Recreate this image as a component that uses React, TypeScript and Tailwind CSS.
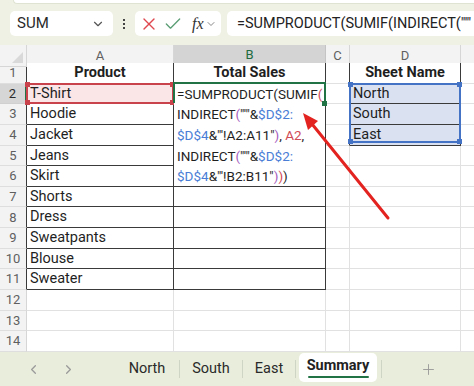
import { ChevronDown, ChevronLeft, ChevronRight, Plus, X, Check } from "lucide-react";

type Cell = { text?: string; bold?: boolean };

const products = ["T-Shirt", "Hoodie", "Jacket", "Jeans", "Skirt", "Shorts", "Dress", "Sweatpants", "Blouse", "Sweater"];
const sheets = ["North", "South", "East"];

function FormulaLines() {
  const blk = "text-[#1f1f1f]";
  const blu = "text-[#4a7ed6]";
  const red = "text-[#cf4a55]";
  const pur = "text-[#a35bbd]";
  return (
    <div className="flex flex-col pl-[3px] text-[13.5px] whitespace-nowrap">
      <div className="h-[20.64px] leading-[21px]">
        <span className={blk}>=SUMPRODUCT(SUMIF</span>
        <span className={red}>(</span>
      </div>
      <div className="h-[20.64px] leading-[21px]">
        <span className={blk}>INDIRECT</span>
        <span className={pur}>(</span>
        <span className={blk}>"'"&amp;</span>
        <span className={blu}>$D$2:</span>
      </div>
      <div className="h-[20.64px] leading-[21px]">
        <span className={blu}>$D$4</span>
        <span className={blk}>&amp;"'!A2:A11"</span>
        <span className={pur}>)</span>
        <span className={blk}>, </span>
        <span className={red}>A2</span>
        <span className={blk}>,</span>
      </div>
      <div className="h-[20.64px] leading-[21px]">
        <span className={blk}>INDIRECT</span>
        <span className={pur}>(</span>
        <span className={blk}>"'"&amp;</span>
        <span className={blu}>$D$2:</span>
      </div>
      <div className="h-[20.64px] leading-[21px]">
        <span className={blu}>$D$4</span>
        <span className={blk}>&amp;"'!B2:B11"</span>
        <span className={pur}>)</span>
        <span className={red}>)</span>
        <span className={blk}>)</span>
      </div>
    </div>
  );
}

function Handle({ className }: { className: string }) {
  return <span className={`absolute w-[5px] h-[5px] ${className}`} />;
}

function Grid() {
  const cells: React.ReactNode[] = [];
  for (let r = 1; r <= 14; r++) {
    const inTable = r <= 11;
    // row header
    cells.push(
      <div
        key={`h${r}`}
        className={
          r === 2
            ? "flex items-center justify-center bg-[#d6d6d6] text-[13px] text-[#2b2b2b] border-b border-b-[#d0d0d0] border-r-2 border-r-[#217346]"
            : inTable
            ? "flex items-center justify-center bg-[#f3f3f3] text-[13px] text-[#5f5f5f] border-b border-b-[#dedede] border-r border-r-[#3a3a3a]"
            : "flex items-center justify-center bg-[#f3f3f3] text-[13px] text-[#5f5f5f] border-b border-b-[#dedede] border-r border-r-[#d6d6d6]"
        }
      >
        {r}
      </div>
    );
    // column A
    const a: Cell = r === 1 ? { text: "Product", bold: true } : { text: products[r - 2] };
    cells.push(
      <div
        key={`a${r}`}
        className={
          r === 1
            ? "flex items-center justify-center font-bold text-[14.5px] border-r border-b border-r-[#3a3a3a] border-b-[#3a3a3a]"
            : r === 2
            ? "relative flex items-center pl-[3px] text-[14.5px] bg-[#fbe6e7] border-r border-b border-r-[#3a3a3a] border-b-[#3a3a3a]"
            : inTable
            ? "flex items-center pl-[3px] text-[14.5px] border-r border-b border-r-[#3a3a3a] border-b-[#3a3a3a]"
            : "border-r border-b border-r-[#e1e1e1] border-b-[#e1e1e1]"
        }
      >
        {a.text}
        {r === 2 && (
          <div className="absolute -left-px -top-px -right-px -bottom-px border-2 border-[#c9434d] pointer-events-none">
            <Handle className="-left-[3px] -top-[3px] bg-[#c9434d]" />
            <Handle className="-right-[3px] -top-[3px] bg-[#c9434d]" />
            <Handle className="-left-[3px] -bottom-[3px] bg-[#c9434d]" />
            <Handle className="-right-[3px] -bottom-[3px] bg-[#c9434d]" />
          </div>
        )}
      </div>
    );
    // column B
    if (r === 1) {
      cells.push(
        <div key="b1" className="flex items-center justify-center font-bold text-[14.5px] border-r border-b border-r-[#3a3a3a] border-b-[#3a3a3a]">
          Total Sales
        </div>
      );
    } else if (r === 2) {
      cells.push(
        <div key="b2" className="relative row-span-5 bg-white border-r border-b border-r-[#3a3a3a] border-b-[#3a3a3a]">
          <FormulaLines />
          <div className="absolute -left-px -top-[2px] -right-px h-[21px] border-t-2 border-x-2 border-[#217346] pointer-events-none">
            <Handle className="-right-[3px] -bottom-[3px] bg-[#217346]" />
          </div>
        </div>
      );
    } else if (r > 6) {
      cells.push(
        <div
          key={`b${r}`}
          className={
            inTable
              ? "border-r border-b border-r-[#3a3a3a] border-b-[#3a3a3a]"
              : "border-r border-b border-r-[#e1e1e1] border-b-[#e1e1e1]"
          }
        />
      );
    }
    // column C
    cells.push(
      <div
        key={`c${r}`}
        className={
          r <= 4
            ? "border-r border-b border-r-[#3a3a3a] border-b-[#e1e1e1]"
            : "border-r border-b border-r-[#e1e1e1] border-b-[#e1e1e1]"
        }
      />
    );
    // column D
    cells.push(
      <div
        key={`d${r}`}
        className={
          r === 1
            ? "flex items-center justify-center font-bold text-[14.5px] border-r border-b border-r-[#3a3a3a] border-b-[#3a3a3a]"
            : r === 2
            ? "relative flex items-center pl-[3px] text-[14.5px] bg-[#dae2f2] border-r border-b border-r-[#3a3a3a] border-b-[#3a3a3a]"
            : r <= 4
            ? "flex items-center pl-[3px] text-[14.5px] bg-[#dae2f2] border-r border-b border-r-[#3a3a3a] border-b-[#3a3a3a]"
            : "border-r border-b border-r-[#e1e1e1] border-b-[#e1e1e1]"
        }
      >
        {r === 1 ? "Sheet Name" : r <= 4 ? sheets[r - 2] : null}
        {r === 2 && (
          <div className="absolute -left-px -top-px -right-px h-[calc(300%+1px)] border-2 border-[#4472c4] pointer-events-none">
            <Handle className="-left-[3px] -top-[3px] bg-[#4472c4]" />
            <Handle className="-right-[3px] -top-[3px] bg-[#4472c4]" />
            <Handle className="-left-[3px] -bottom-[3px] bg-[#4472c4]" />
            <Handle className="-right-[3px] -bottom-[3px] bg-[#4472c4]" />
          </div>
        )}
      </div>
    );
    // column E
    cells.push(<div key={`e${r}`} className="border-b border-b-[#e1e1e1]" />);
  }
  return (
    <div className="grid grid-cols-[27px_147px_152px_24px_111px_1fr] grid-rows-14 h-[289px] bg-white text-[#1f1f1f]">
      {cells}
    </div>
  );
}

export default function App() {
  return (
    <div className="relative w-[474px] h-[386px] overflow-hidden flex flex-col bg-white font-['Roboto','Liberation_Sans',sans-serif]">
      {/* formula bar band */}
      <div className="h-[45px] bg-[#eef1e3] flex flex-col">
        <div className="h-[4px] ml-[13px] bg-white rounded-bl-[4px] border-b border-l border-[#dfe3d2]" />
        <div className="flex items-center mt-[7px] h-[25px]">
          <div className="ml-[10px] w-[103px] h-full bg-white rounded-[5px] flex items-center justify-between pl-[7px] pr-[8px] text-[15px] text-[#2a2a2a]">
            SUM
            <ChevronDown size={14} className="text-[#555]" />
          </div>
          <div className="w-[22px] flex flex-col items-center gap-[2px]">
            <span className="w-[2px] h-[2px] bg-[#444]" />
            <span className="w-[2px] h-[2px] bg-[#444]" />
            <span className="w-[2px] h-[2px] bg-[#444]" />
          </div>
          <div className="w-[86px] h-full bg-white rounded-[5px] flex items-center pl-[4px] gap-[4px]">
            <X size={20} strokeWidth={1.6} className="text-[#e0484f]" />
            <Check size={20} strokeWidth={1.6} className="text-[#5b9e74]" />
            <span className="flex items-center ml-[5px]">
              <span className="font-['Liberation_Serif',serif] italic text-[16px] text-[#333]">fx</span>
              <ChevronDown size={12} className="text-[#888] ml-[1px]" />
            </span>
          </div>
          <div className="ml-[6px] flex-1 h-full bg-white rounded-l-[5px] flex items-center pl-[10px] text-[14.5px] text-[#222] whitespace-nowrap overflow-hidden">
            =SUMPRODUCT(SUMIF(INDIRECT("'"
          </div>
        </div>
      </div>

      {/* column headers */}
      <div className="grid grid-cols-[27px_147px_152px_24px_111px_1fr] h-[18px] bg-[#f3f3f3] text-[13px] text-[#5f5f5f]">
        <div className="relative border-r border-b border-[#d6d6d6]">
          <span className="absolute right-[3px] bottom-[3px] w-0 h-0 border-l-[11px] border-l-transparent border-b-[11px] border-b-[#d9d9d9]" />
        </div>
        <div className="flex items-center justify-center border-r border-r-[#d6d6d6] border-b border-b-[#3a3a3a]">A</div>
        <div className="flex items-center justify-center bg-[#d4d4d4] text-[#1e6b41] border-r border-r-[#c4c4c4] border-b-2 border-b-[#217346]">B</div>
        <div className="flex items-center justify-center border-r border-r-[#d6d6d6] border-b border-b-[#d6d6d6]">C</div>
        <div className="flex items-center justify-center border-r border-r-[#d6d6d6] border-b border-b-[#3a3a3a]">D</div>
        <div className="border-b border-b-[#d6d6d6]" />
      </div>

      <Grid />

      {/* sheet tabs */}
      <div className="flex-1 bg-[#e8eedb] flex items-center text-[14.5px] text-[#2a2a2a]">
        <div className="w-[115px] flex items-center pl-[26px] gap-[20px] text-[#9a9a9a]">
          <ChevronLeft size={15} />
          <ChevronRight size={15} />
        </div>
        <div className="w-[64px] text-center">North</div>
        <span className="w-px h-[18px] bg-[#cfd5c4]" />
        <div className="w-[62px] text-center">South</div>
        <span className="w-px h-[18px] bg-[#cfd5c4]" />
        <div className="w-[52px] text-center">East</div>
        <span className="w-px h-[18px] bg-[#cfd5c4]" />
        <div className="ml-[3px] w-[78px] h-[29px] mt-[-3px] bg-white rounded-[5px] flex flex-col items-center justify-center font-bold text-[#222]">
          <span className="leading-[18px]">Summary</span>
          <span className="w-[61px] h-[2px] rounded bg-[#217346] mt-[1px]" />
        </div>
        <span className="ml-[4px] w-px h-[18px] bg-[#cfd5c4]" />
        <div className="flex-1 flex justify-center">
          <Plus size={17} strokeWidth={1.3} className="text-[#9a9a9a]" />
        </div>
      </div>

      {/* annotation arrow */}
      <svg className="absolute inset-0 pointer-events-none" width="474" height="386">
        <line x1="388" y1="218" x2="312" y2="124" stroke="#e3231f" strokeWidth="3" strokeLinecap="round" />
        <polygon points="303,113 318,121 308,130" fill="#e3231f" />
      </svg>
    </div>
  );
}
